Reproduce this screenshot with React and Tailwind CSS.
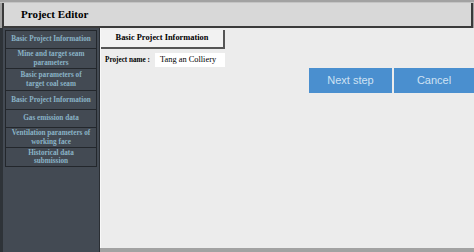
import React from "react";

const serif = { fontFamily: '"Liberation Serif", "Times New Roman", serif' };
const sans = { fontFamily: '"Liberation Sans", Arial, sans-serif' };

// sidebar entries with their box heights (lines broken as in the original)
const menu = [
  { lines: ["Basic Project Information"], h: "h-[19px]" },
  { lines: ["Mine and target seam", "parameters"], h: "h-[21px]" },
  { lines: ["Basic parameters of", "target coal seam"], h: "h-[23px]" },
  { lines: ["Basic Project Information"], h: "h-[20px]" },
  { lines: ["Gas emission data"], h: "h-[19px]" },
  { lines: ["Ventilation parameters of", "working face"], h: "h-[21px]" },
  { lines: ["Historical data", "submission"], h: "h-[20px]" },
];

const Sidebar = () => {
  return (
    <div className="w-[100px] shrink-0 bg-[#434a53] border-l-[3px] border-l-[#2e3338] border-r border-r-[#2a2e33] flex flex-col pt-[2px] pl-[2px] pr-[2px]">
      {menu.map((item, i) => (
        <div
          key={i}
          className={`${item.h} -mt-px first:mt-0 border border-[#23272c] flex flex-col items-center justify-center text-center text-[7.2px] leading-[8.5px] font-bold text-[#8ab3c6]`}
          style={serif}
        >
          {item.lines.map((l, j) => (
            <span key={j} className="whitespace-nowrap">{l}</span>
          ))}
        </div>
      ))}
    </div>
  );
};

const MainPanel = () => {
  return (
    <div className="flex-1 flex flex-col bg-[#ececec] border-l border-l-[#f8f8f8] mb-[4px]">
      <div className="mt-[2px] w-[124px] h-[19px] bg-[#f2f2f2] border-r-2 border-b-2 border-[#555] flex items-center justify-center">
        <span className="text-[8.4px] font-bold text-black" style={serif}>Basic Project Information</span>
      </div>

      <div className="mt-[4px] h-[14px] flex items-center pl-[4px]">
        <span className="text-[7.2px] font-bold text-black" style={serif}>Project name :</span>
        <div className="ml-[5px] w-[70px] h-[14px] bg-white flex items-center pl-[5px]">
          <span className="text-[8.4px] text-black" style={serif}>Tang an Colliery</span>
        </div>
      </div>

      <div className="mt-[1px] flex justify-end gap-[2px]">
        <button className="w-[83px] h-[25px] bg-[#4a8fcf] text-[11px] text-[#cfe2f3]" style={sans}>Next step</button>
        <button className="w-[80px] h-[25px] bg-[#4a8fcf] text-[11px] text-[#cfe2f3]" style={sans}>Cancel</button>
      </div>
    </div>
  );
};

export default function App() {
  return (
    <div className="w-[474px] h-[252px] bg-[#a2a2a2] flex flex-col overflow-hidden">
      <div className="h-[3px] shrink-0 border-b border-[#c4c4c4]" />
      <div className="h-[25px] shrink-0 ml-[2px] mr-[1px] bg-[#d8d8d8] border-l-2 border-r-2 border-b-2 border-[#3a3a3a] flex items-center pl-[17px]">
        <span className="text-[11px] font-bold text-black" style={serif}>Project Editor</span>
      </div>
      <div className="flex flex-1 min-h-0">
        <Sidebar />
        <MainPanel />
      </div>
    </div>
  );
}
